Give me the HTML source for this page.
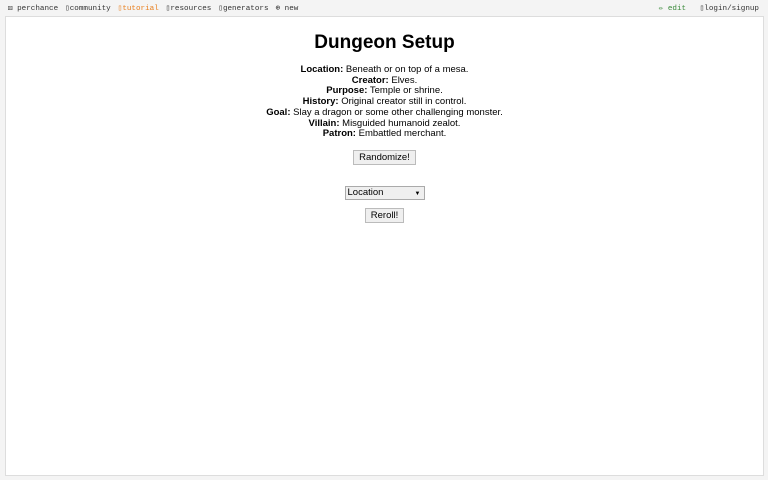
<!DOCTYPE html>
<html><head><style>
body{margin:0;width:768px;height:480px;background:#f4f4f4;font-family:"Liberation Sans",sans-serif;position:relative;overflow:hidden}
.nav{position:absolute;top:3px;left:8px;font-family:"Liberation Mono",monospace;font-size:7.6px;color:#333;white-space:nowrap}
.nav span{margin-right:7px}
.navr{position:absolute;top:3px;right:9px;font-family:"Liberation Mono",monospace;font-size:7.6px;color:#333}
.main{position:absolute;left:5px;top:16px;width:757px;height:458px;background:#fff;border:1px solid #ddd;text-align:center}
h1{font-size:19px;margin:15px 0 0;font-weight:bold;color:#000}
.lines{margin-top:11px;font-size:9.5px;line-height:10.7px;color:#000}
.btn{display:inline-block;background:#efefef;border:1px solid #bbb;font-size:9.5px;padding:1px 5px;line-height:11px}
.sel{display:inline-block;width:74px;text-align:left;background:#efefef;border:1px solid #aaa;font-size:9.5px;padding:1px 2px;line-height:10px;position:relative}
</style></head><body>
<div class="nav"><span>⚄ perchance</span><span>▯community</span><span style="color:#e87f1e">▯tutorial</span><span>▯resources</span><span>▯generators</span><span>⊕ new</span></div>
<div class="navr"><span style="color:#3a8a3a">✏ edit</span>&nbsp;&nbsp; ▯login/signup</div>
<div class="main">
<h1>Dungeon Setup</h1>
<div class="lines">
<b>Location:</b> Beneath or on top of a mesa.<br>
<b>Creator:</b> Elves.<br>
<b>Purpose:</b> Temple or shrine.<br>
<b>History:</b> Original creator still in control.<br>
<b>Goal:</b> Slay a dragon or some other challenging monster.<br>
<b>Villain:</b> Misguided humanoid zealot.<br>
<b>Patron:</b> Embattled merchant.
</div>
<div style="margin-top:7px"><span class="btn">Randomize!</span></div>
<div style="margin-top:17px"><span class="sel">Location<span style="position:absolute;right:3px;font-size:6px;top:2px">▼</span></span></div>
<div style="margin-top:5px"><span class="btn">Reroll!</span></div>
</div>
</body></html>
